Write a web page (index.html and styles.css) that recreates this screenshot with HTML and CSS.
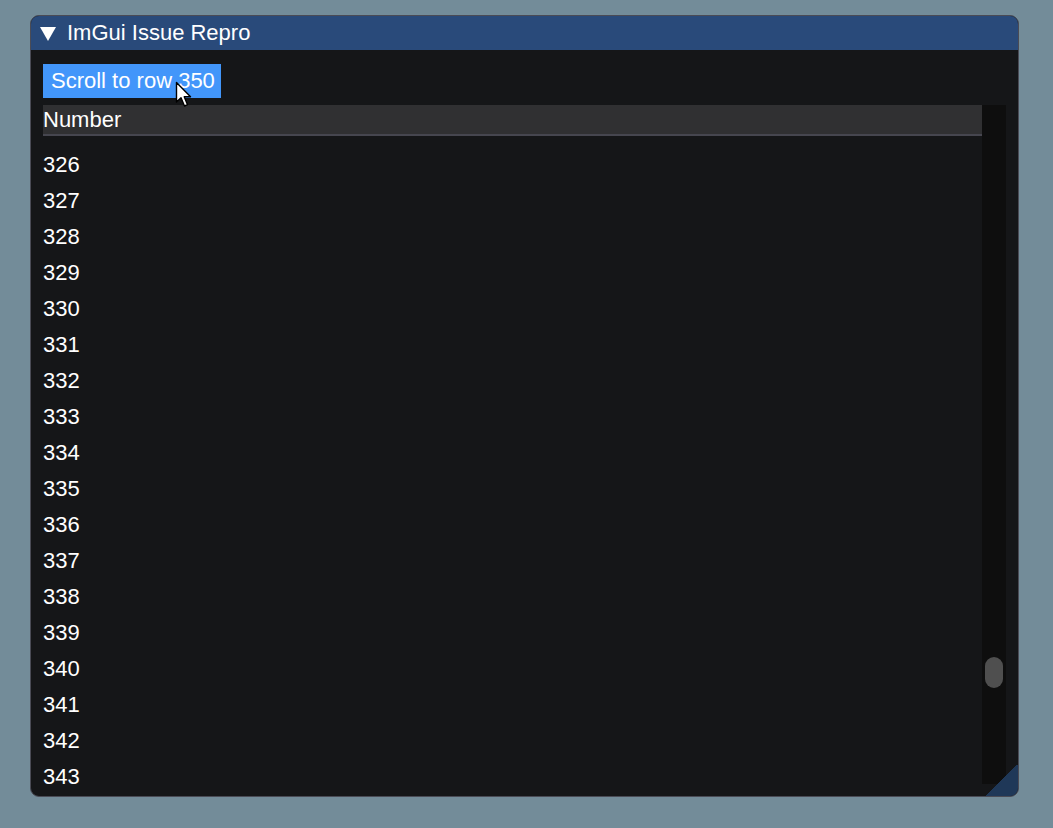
FILE: index.html
```html
<!DOCTYPE html>
<html>
<head>
<meta charset="utf-8">
<link rel="stylesheet" href="styles.css">
</head>
<body>
<div class="window">
  <div class="titlebar">
    <svg class="arrow" width="16" height="14" viewBox="0 0 16 14"><polygon points="0,0 16,0 8,14" fill="#fff"/></svg>
    <span class="title">ImGui Issue Repro</span>
  </div>
  <div class="content">
    <div class="btnrow">
      <div class="button">Scroll to row 350</div>
      <svg class="cursor" width="20" height="28" viewBox="0 0 20 28"><path d="M1.5 1.5 L1.5 21 L6 16.8 L9.5 25 L12.5 23.7 L9.2 15.8 L15.5 15.8 Z" fill="#fff" stroke="#000" stroke-width="1.4" stroke-linejoin="round"/></svg>
    </div>
    <div class="table">
      <div class="tablemain">
        <div class="header">Number</div>
        <div class="rows">
          <div class="row">326</div>
          <div class="row">327</div>
          <div class="row">328</div>
          <div class="row">329</div>
          <div class="row">330</div>
          <div class="row">331</div>
          <div class="row">332</div>
          <div class="row">333</div>
          <div class="row">334</div>
          <div class="row">335</div>
          <div class="row">336</div>
          <div class="row">337</div>
          <div class="row">338</div>
          <div class="row">339</div>
          <div class="row">340</div>
          <div class="row">341</div>
          <div class="row">342</div>
          <div class="row">343</div>
        </div>
      </div>
      <div class="scrollbar"><div class="grab"></div></div>
    </div>
  </div>
  <div class="grip"></div>
</div>
</body>
</html>
```
FILE: styles.css
```css
html, body {
  margin: 0;
  padding: 0;
  background: #738c99;
  width: 1053px;
  height: 828px;
  overflow: hidden;
  font-family: "Liberation Sans", Arial, sans-serif;
}
.window {
  position: relative;
  margin: 15px 0 0 30px;
  width: 989px;
  height: 782px;
  box-sizing: border-box;
  border: 1px solid #4a4b55;
  border-radius: 9px;
  background: #151618;
  overflow: hidden;
  display: flex;
  flex-direction: column;
}
.titlebar {
  height: 34px;
  background: #294a7a;
  display: flex;
  align-items: center;
  color: #fff;
  font-size: 22px;
  flex: none;
}
.arrow {
  margin-left: 9px;
  margin-right: 11px;
  margin-top: 1px;
}
.content {
  padding: 14px 12px 0 12px;
  display: flex;
  flex-direction: column;
  flex: 1;
  min-height: 0;
}
.btnrow {
  position: relative;
  height: 34px;
  flex: none;
}
.button {
  display: inline-flex;
  align-items: center;
  height: 34px;
  padding: 0 8px;
  background: #4296fa;
  color: #fff;
  font-size: 22px;
  box-sizing: border-box;
  width: 178px;
  white-space: nowrap;
}
.cursor {
  position: absolute;
  left: 132px;
  top: 17px;
}
.table {
  margin-top: 7px;
  height: 679px;
  display: flex;
  flex: none;
}
.tablemain {
  flex: 1;
  display: flex;
  flex-direction: column;
}
.header {
  height: 28px;
  padding-top: 1px;
  background: #303032;
  border-bottom: 2px solid #46464f;
  color: #fff;
  font-size: 22px;
  display: flex;
  align-items: center;
  flex: none;
}
.rows {
  padding-top: 11px;
}
.row {
  height: 36px;
  display: flex;
  align-items: center;
  color: #fff;
  font-size: 22px;
}
.scrollbar {
  width: 24px;
  background: #0e0e0e;
  position: relative;
  flex: none;
}
.grab {
  position: absolute;
  left: 3px;
  top: 552px;
  width: 18px;
  height: 31px;
  border-radius: 9px;
  background: #4f4f4f;
}
.grip {
  position: absolute;
  right: 0;
  bottom: 0;
  width: 32px;
  height: 32px;
  background: linear-gradient(135deg, transparent 50%, #1f3858 50%);
}
```
